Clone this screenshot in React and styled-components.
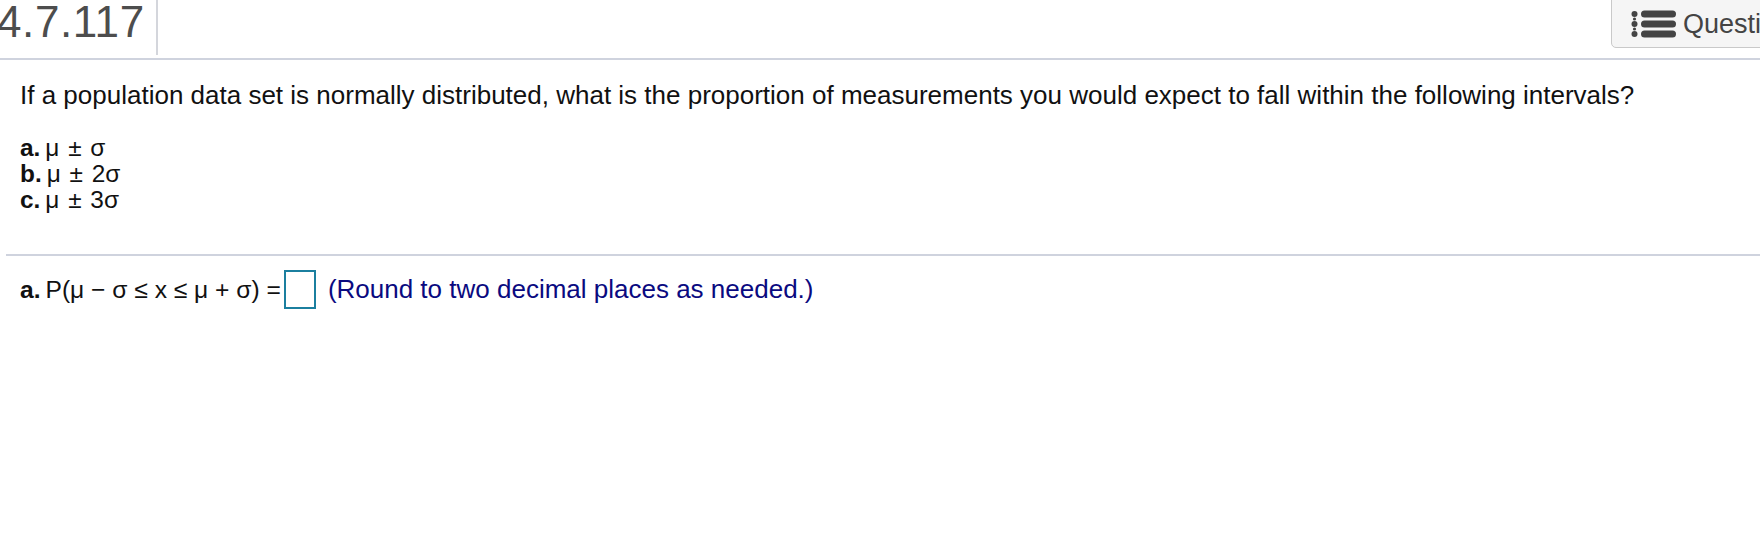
import React from 'react';
import styled, { createGlobalStyle } from 'styled-components';

const GlobalStyle = createGlobalStyle`
  html, body {
    margin: 0;
    padding: 0;
    background: #fff;
    overflow: hidden;
  }
  body {
    font-family: "Liberation Sans", Arial, sans-serif;
  }
`;

const Page = styled.div`
  width: 1760px;
  height: 548px;
  overflow: hidden;
  background: #fff;
`;

const Header = styled.div`
  display: flex;
  align-items: flex-start;
  height: 58px;
  border-bottom: 2px solid #cfd3de;
`;

const Title = styled.div`
  height: 55px;
  margin-left: -3px;
  padding-right: 11px;
  border-right: 2px solid #d4d6dc;
  font-size: 44px;
  line-height: 44px;
  color: #4d4d4d;
  letter-spacing: 0.6px;
`;

const Spacer = styled.div`
  flex: 1;
`;

const HelpButton = styled.div`
  display: flex;
  align-items: center;
  gap: 6px;
  width: 230px;
  height: 58px;
  margin-top: -10px;
  margin-right: -81px;
  padding: 10px 0 0 19px;
  box-sizing: border-box;
  background: #f5f5f5;
  border: 1px solid #c9c9c9;
  border-radius: 5px;
  color: #444;
  font-size: 27px;
  white-space: nowrap;
  flex-shrink: 0;

  svg {
    flex-shrink: 0;
  }
`;

const Content = styled.div`
  padding: 20px 0 0 20px;
`;

const Prompt = styled.p`
  margin: 0;
  font-size: 26px;
  line-height: 30px;
  color: #111;
`;

const Options = styled.div`
  margin-top: 25px;
`;

const OptionRow = styled.div`
  font-size: 24.4px;
  line-height: 26px;
  color: #111;
  word-spacing: 2px;
`;

const Label = styled.b`
  font-weight: bold;
  margin-right: 5px;
`;

const Divider = styled.hr`
  margin: 41px 0 0 6px;
  border: 0;
  height: 2px;
  background: #cfd3de;
`;

const AnswerRow = styled.div`
  display: flex;
  align-items: center;
  padding: 14px 0 0 20px;
  font-size: 26px;
  color: #111;
`;

const Formula = styled.span`
  font-size: 24.6px;
`;

const AnswerBox = styled.span`
  display: inline-block;
  width: 28px;
  height: 35px;
  border: 2px solid #1b7f9f;
  margin: 0 12px 0 3px;
`;

const Hint = styled.span`
  color: #0a0a80;
`;

const ListIcon = () => (
  <svg width="46" height="28" viewBox="0 0 46 28">
    <g fill="#444">
      <circle cx="3.5" cy="4" r="3" />
      <circle cx="3.5" cy="14" r="3" />
      <circle cx="3.5" cy="24" r="3" />
      <circle cx="3.5" cy="9" r="1.6" />
      <circle cx="3.5" cy="19" r="1.6" />
      <rect x="10" y="0.5" width="35" height="7" rx="3.5" />
      <rect x="10" y="10.5" width="35" height="7" rx="3.5" />
      <rect x="10" y="20.5" width="35" height="7" rx="3.5" />
    </g>
  </svg>
);

const options = [
  { label: 'a.', expr: 'μ ± σ' },
  { label: 'b.', expr: 'μ ± 2σ' },
  { label: 'c.', expr: 'μ ± 3σ' },
];

const App = () => {
  return (
    <Page>
      <GlobalStyle />
      <Header>
        <Title>4.7.117</Title>
        <Spacer />
        <HelpButton>
          <ListIcon />
          <span>Question Help</span>
        </HelpButton>
      </Header>

      <Content>
        <Prompt>
          If a population data set is normally distributed, what is the proportion of
          measurements you would expect to fall within the following intervals?
        </Prompt>
        <Options>
          {options.map((o) => (
            <OptionRow key={o.label}>
              <Label>{o.label}</Label>
              {o.expr}
            </OptionRow>
          ))}
        </Options>
      </Content>

      <Divider />

      <AnswerRow>
        <Formula>
          <Label>a.</Label>
          P(μ − σ ≤ x ≤ μ + σ) =
        </Formula>
        <AnswerBox />
        <Hint>(Round to two decimal places as needed.)</Hint>
      </AnswerRow>
    </Page>
  );
};

export default App;
